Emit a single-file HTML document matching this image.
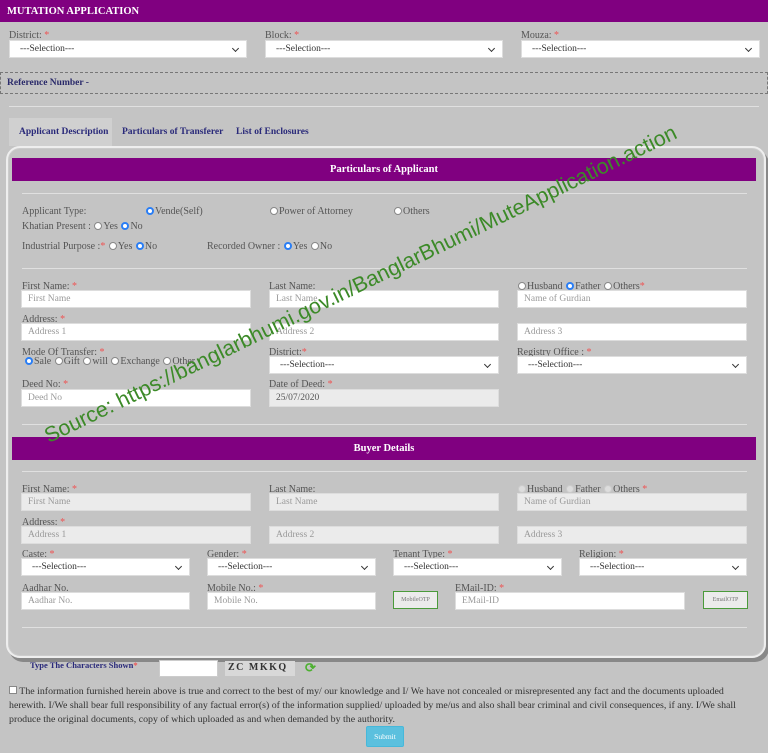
<!DOCTYPE html>
<html><head><meta charset="utf-8"><style>
*{box-sizing:border-box;margin:0;padding:0}
body{width:768px;height:753px;background:#c4c4c4;font-family:"Liberation Serif",serif;font-size:10px;color:#555;position:relative;overflow:hidden}
.a{position:absolute;white-space:nowrap}
.s{color:#e55}
.in{position:absolute;background:#fff;border:1px solid #ddd;height:18px;font-size:9.5px;color:#999;padding:3px 6px;line-height:11px}
.dis{background:#ebebeb}
.sel{position:absolute;background:#fff;height:18px;font-size:9.5px;color:#333;padding:3px 10px;line-height:11px;border:1px solid #ddd}
.sel:after{content:"";position:absolute;right:8px;top:5px;width:4px;height:4px;border-right:1.5px solid #333;border-bottom:1.5px solid #333;transform:rotate(45deg)}
.hr{position:absolute;height:1px;background:#e0e0e0}
.bar{position:absolute;background:#800080;color:#fff;font-weight:bold;text-align:center;font-size:10.5px}
.r{display:inline-block;width:8px;height:8px;border-radius:50%;background:#fff;border:1px solid #888;vertical-align:-1px;margin:0 1px}
.r.on{background:#fff;border:2.5px solid #2a7ef5}
.r.g{background:#ddd;border-color:#ccc}
.btn{position:absolute;border:1px solid #4a9a3a;background:#ebebeb;font-size:6px;color:#777;text-align:center;line-height:16px}
</style></head><body>
<div class="a" style="left:0;top:0;width:768px;height:22px;background:#800080;color:#fff;font-weight:bold;font-size:10.5px;padding:6px 7px">MUTATION APPLICATION</div>
<div class="a" style="left:9px;top:30px">District: <span class="s">*</span></div>
<div class="a" style="left:265px;top:30px">Block: <span class="s">*</span></div>
<div class="a" style="left:521px;top:30px">Mouza: <span class="s">*</span></div>
<div class="sel" style="left:9px;top:40px;width:238px">---Selection---</div>
<div class="sel" style="left:265px;top:40px;width:238px">---Selection---</div>
<div class="sel" style="left:521px;top:40px;width:239px">---Selection---</div>
<div class="a" style="left:0;top:72px;width:768px;height:22px;border:1px dashed #777;color:#2a2a6a;font-weight:bold;font-size:9.5px;padding:5px 6px">Reference Number -</div>
<div class="hr" style="left:9px;top:106px;width:750px"></div>
<div class="a" style="left:9px;top:118px;width:103px;height:28px;background:#d0d0d0"></div>
<div class="a" style="left:19px;top:127px;color:#2a2a7a;font-weight:bold;font-size:9.5px">Applicant Description</div>
<div class="a" style="left:122px;top:127px;color:#2a2a7a;font-weight:bold;font-size:9.5px">Particulars of Transferer</div>
<div class="a" style="left:236px;top:127px;color:#2a2a7a;font-weight:bold;font-size:9.5px">List of Enclosures</div>
<div class="a" style="left:6px;top:146px;width:760px;height:512px;border:2px solid #eee;border-radius:14px;box-shadow:3px 4px 0 #888,inset 0 0 0 1px #ccc"></div>
<div class="bar" style="left:12px;top:158px;width:744px;height:23px;line-height:23px">Particulars of Applicant</div>
<div class="hr" style="left:22px;top:193px;width:725px"></div>
<div class="a" style="left:22px;top:206px">Applicant Type:</div>
<div class="a" style="left:145px;top:206px"><span class="r on"></span>Vende(Self)</div>
<div class="a" style="left:269px;top:206px"><span class="r"></span>Power of Attorney</div>
<div class="a" style="left:393px;top:206px"><span class="r"></span>Others</div>
<div class="a" style="left:22px;top:221px">Khatian Present : <span class="r"></span>Yes <span class="r on"></span>No</div>
<div class="a" style="left:22px;top:241px">Industrial Purpose :<span class="s">*</span> <span class="r"></span>Yes <span class="r on"></span>No</div>
<div class="a" style="left:207px;top:241px">Recorded Owner : <span class="r on"></span>Yes <span class="r"></span>No</div>
<div class="hr" style="left:22px;top:268px;width:725px"></div>
<div class="a" style="left:22px;top:281px">First Name: <span class="s">*</span></div>
<div class="a" style="left:269px;top:281px">Last Name:</div>
<div class="a" style="left:517px;top:281px"><span class="r"></span>Husband <span class="r on"></span>Father <span class="r"></span>Others<span class="s">*</span></div>
<div class="in" style="left:21px;top:290px;width:230px">First Name</div>
<div class="in" style="left:269px;top:290px;width:230px">Last Name</div>
<div class="in" style="left:517px;top:290px;width:230px">Name of Gurdian</div>
<div class="a" style="left:22px;top:314px">Address: <span class="s">*</span></div>
<div class="in" style="left:21px;top:323px;width:230px">Address 1</div>
<div class="in" style="left:269px;top:323px;width:230px">Address 2</div>
<div class="in" style="left:517px;top:323px;width:230px">Address 3</div>
<div class="a" style="left:22px;top:347px">Mode Of Transfer: <span class="s">*</span></div>
<div class="a" style="left:24px;top:356px"><span class="r on"></span>Sale <span class="r"></span>Gift <span class="r"></span>will <span class="r"></span>Exchange <span class="r"></span>Other</div>
<div class="a" style="left:269px;top:347px">District:<span class="s">*</span></div>
<div class="a" style="left:517px;top:347px">Registry Office : <span class="s">*</span></div>
<div class="sel" style="left:269px;top:356px;width:230px">---Selection---</div>
<div class="sel" style="left:517px;top:356px;width:230px">---Selection---</div>
<div class="a" style="left:22px;top:379px">Deed No: <span class="s">*</span></div>
<div class="a" style="left:269px;top:379px">Date of Deed: <span class="s">*</span></div>
<div class="in" style="left:21px;top:389px;width:230px">Deed No</div>
<div class="in dis" style="left:269px;top:389px;width:230px;color:#555">25/07/2020</div>
<div class="hr" style="left:22px;top:424px;width:725px"></div>
<div class="bar" style="left:12px;top:437px;width:744px;height:23px;line-height:23px">Buyer Details</div>
<div class="hr" style="left:22px;top:471px;width:725px"></div>
<div class="a" style="left:22px;top:484px">First Name: <span class="s">*</span></div>
<div class="a" style="left:269px;top:484px">Last Name:</div>
<div class="a" style="left:517px;top:484px"><span class="r g"></span>Husband <span class="r g"></span>Father <span class="r g"></span>Others <span class="s">*</span></div>
<div class="in dis" style="left:21px;top:493px;width:230px">First Name</div>
<div class="in dis" style="left:269px;top:493px;width:230px">Last Name</div>
<div class="in dis" style="left:517px;top:493px;width:230px">Name of Gurdian</div>
<div class="a" style="left:22px;top:517px">Address: <span class="s">*</span></div>
<div class="in dis" style="left:21px;top:526px;width:230px">Address 1</div>
<div class="in dis" style="left:269px;top:526px;width:230px">Address 2</div>
<div class="in dis" style="left:517px;top:526px;width:230px">Address 3</div>
<div class="a" style="left:22px;top:549px">Caste: <span class="s">*</span></div>
<div class="a" style="left:207px;top:549px">Gender: <span class="s">*</span></div>
<div class="a" style="left:393px;top:549px">Tenant Type: <span class="s">*</span></div>
<div class="a" style="left:579px;top:549px">Religion: <span class="s">*</span></div>
<div class="sel" style="left:21px;top:558px;width:169px">---Selection---</div>
<div class="sel" style="left:207px;top:558px;width:169px">---Selection---</div>
<div class="sel" style="left:393px;top:558px;width:169px">---Selection---</div>
<div class="sel" style="left:579px;top:558px;width:168px">---Selection---</div>
<div class="a" style="left:22px;top:583px">Aadhar No.</div>
<div class="a" style="left:207px;top:583px">Mobile No.: <span class="s">*</span></div>
<div class="a" style="left:455px;top:583px">EMail-ID: <span class="s">*</span></div>
<div class="in" style="left:21px;top:592px;width:169px">Aadhar No.</div>
<div class="in" style="left:207px;top:592px;width:169px">Mobile No.</div>
<div class="btn" style="left:393px;top:591px;width:45px;height:18px">MobileOTP</div>
<div class="in" style="left:455px;top:592px;width:230px">EMail-ID</div>
<div class="btn" style="left:703px;top:591px;width:45px;height:18px">EmailOTP</div>
<div class="hr" style="left:22px;top:627px;width:725px"></div>
<div class="a" style="left:30px;top:660px;color:#2a2a7a;font-weight:bold;font-size:8.5px">Type The Characters Shown<span class="s">*</span></div>
<div class="a" style="left:159px;top:660px;width:59px;height:17px;background:#fff;border:1px solid #ccc"></div>
<div class="a" style="left:225px;top:661px;width:70px;height:15px;background:#d8d8d8;font-weight:bold;font-size:10px;color:#333;letter-spacing:1.5px;padding:1px 3px">ZC MKKQ</div>
<div class="a" style="left:305px;top:660px;color:#4cb030;font-size:13px;font-weight:bold">⟳</div>
<div class="a" style="left:9px;top:685px;white-space:normal;width:752px;line-height:14px;color:#333;font-size:9.9px"><span style="display:inline-block;width:8px;height:8px;background:#fff;border:1px solid #888;vertical-align:0"></span> The information furnished herein above is true and correct to the best of my/ our knowledge and I/ We have not concealed or misrepresented any fact and the documents uploaded herewith. I/We shall bear full responsibility of any factual error(s) of the information supplied/ uploaded by me/us and also shall bear criminal and civil consequences, if any. I/We shall produce the original documents, copy of which uploaded as and when demanded by the authority.</div>
<div class="a" style="left:366px;top:726px;width:38px;height:21px;background:#5bc0de;border:1px solid #46b8da;border-radius:2px;color:#fff;font-size:7.5px;text-align:center;line-height:19px">Submit</div>
<div class="a" style="left:50px;top:426px;transform-origin:0 100%;transform:rotate(-25.9deg);font-family:'Liberation Sans',sans-serif;font-size:21.5px;color:#3c8a28;line-height:20px">Source: https://banglarbhumi.gov.in/BanglarBhumi/MuteApplication.action</div>
</body></html>
